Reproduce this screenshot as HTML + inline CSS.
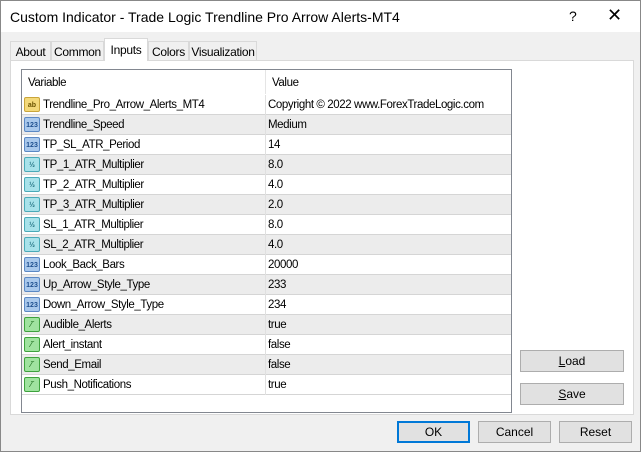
<!DOCTYPE html><html><head><style>
*{margin:0;padding:0;box-sizing:border-box}
body{width:641px;height:452px;background:#f0f0f0;font-family:"Liberation Sans",sans-serif;font-size:12px;color:#000;position:relative;overflow:hidden;border:1px solid #888}
.a{position:absolute}
.title{left:0;top:0;width:639px;height:31px;background:#fff}
.tab{position:absolute;top:40px;height:19px;border:1px solid #d9d9d9;border-bottom:none;background:#f0f0f0;padding:3px 0 0;text-align:center;letter-spacing:-0.3px}
.panel{left:9px;top:59px;width:624px;height:355px;background:#fff;border:1px solid #d9d9d9}
.list{left:20px;top:68px;width:491px;height:344px;border:1px solid #828790;background:#fff;overflow:hidden;font-size:11.5px;letter-spacing:-0.4px}
.row{position:absolute;left:0;width:489px;height:20px;border-bottom:1px solid #d5d5d5}
.row.g{background:#ececec}
.row span{position:absolute;top:4px;white-space:nowrap}
.ic{position:absolute;left:2px;top:2px;width:16px;height:15px;border-radius:2px;font-size:7px;font-weight:bold;line-height:15px;text-align:center;letter-spacing:0}
.btn{position:absolute;height:22px;background:#e1e1e1;border:1px solid #adadad;text-align:center;line-height:20px}
</style></head><body>
<div class="a title"></div>
<div class="a" style="left:9px;top:8px;font-size:14px">Custom Indicator - Trade Logic Trendline Pro Arrow Alerts-MT4</div>
<div class="a" style="left:568px;top:7px;font-size:14px">?</div>
<div class="a" style="left:606px;top:4px;font-size:18px">✕</div>
<div class="a panel"></div>
<div class="tab" style="left:9px;width:41px">About</div>
<div class="tab" style="left:50px;width:53px">Common</div>
<div class="tab" style="left:103px;top:37px;height:23px;width:44px;background:#fff;padding-top:4px">Inputs</div>
<div class="tab" style="left:147px;width:41px">Colors</div>
<div class="tab" style="left:188px;width:68px">Visualization</div>
<div class="a list">
<div class="a" style="left:0;top:0;width:489px;height:24px;background:#fff"></div>
<div class="a" style="left:6px;top:7px">Variable</div>
<div class="a" style="left:243px;top:0;width:1px;height:24px;background:#e5e5e5"></div>
<div class="a" style="left:250px;top:7px">Value</div>
<div id="rows"></div>
</div>
<div class="btn" style="left:519px;top:349px;width:104px"><u>L</u>oad</div>
<div class="btn" style="left:519px;top:382px;width:104px"><u>S</u>ave</div>
<div class="btn" style="left:396px;top:420px;width:73px;border:2px solid #0078d7;line-height:18px">OK</div>
<div class="btn" style="left:477px;top:420px;width:73px">Cancel</div>
<div class="btn" style="left:558px;top:420px;width:73px">Reset</div>
<script>
var d=[["ab","Trendline_Pro_Arrow_Alerts_MT4","Copyright © 2022 www.ForexTradeLogic.com"],["n","Trendline_Speed","Medium"],["n","TP_SL_ATR_Period","14"],["f","TP_1_ATR_Multiplier","8.0"],["f","TP_2_ATR_Multiplier","4.0"],["f","TP_3_ATR_Multiplier","2.0"],["f","SL_1_ATR_Multiplier","8.0"],["f","SL_2_ATR_Multiplier","4.0"],["n","Look_Back_Bars","20000"],["n","Up_Arrow_Style_Type","233"],["n","Down_Arrow_Style_Type","234"],["b","Audible_Alerts","true"],["b","Alert_instant","false"],["b","Send_Email","false"],["b","Push_Notifications","true"]];
var h="";
d.forEach(function(r,i){
var ic={ab:'<div class="ic" style="background:#f4d97a;border:1px solid #c9a53a;color:#6b5300">ab</div>',n:'<div class="ic" style="background:#a9c8ec;border:1px solid #5a88c4;color:#1e4f8f">123</div>',f:'<div class="ic" style="background:#a8e2ea;border:1px solid #49aab8;color:#1f6f80">½</div>',b:'<div class="ic" style="background:#9fe39f;border:1px solid #3da23d;color:#1f6f1f">⁄‾</div>'}[r[0]];
h+='<div class="row'+(i%2?' g':'')+'" style="top:'+(25+i*20)+'px">'+ic+'<span style="left:21px">'+r[1]+'</span><div class="a" style="left:243px;top:0;width:1px;height:20px;background:#e0e0e0"></div><span style="left:246px">'+r[2]+'</span></div>';});
document.getElementById('rows').innerHTML=h;
</script>
</body></html>
